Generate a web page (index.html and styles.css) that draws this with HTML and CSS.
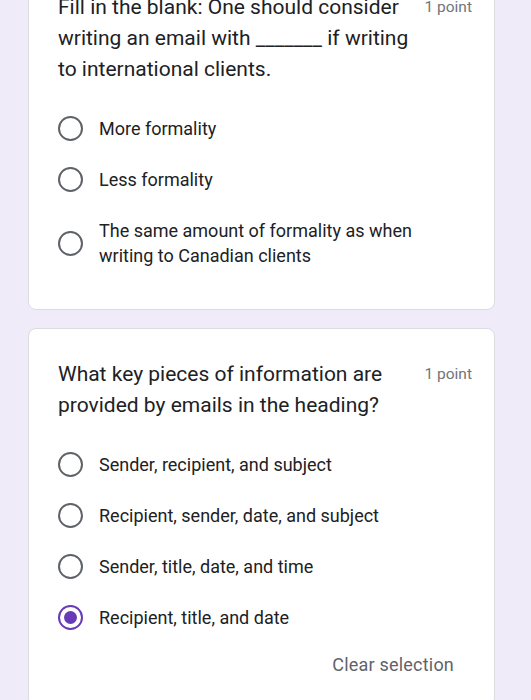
FILE: index.html
```html
<!DOCTYPE html>
<html lang="en">
<head>
    <meta charset="UTF-8">
    <meta name="viewport" content="width=device-width, initial-scale=1.0">
    <title>Quiz</title>
    <link rel="stylesheet" href="styles.css">
</head>
<body>
    <div class="form">

        <!-- Question 1 -->
        <div class="card first">
            <div class="question">
                <div class="title">Fill in the blank: One should consider writing an email with _______ if writing to international clients.</div>
                <div class="points">1 point</div>
            </div>
            <div class="options">
                <label class="option"><span class="radio"></span><span class="text">More formality</span></label>
                <label class="option"><span class="radio"></span><span class="text">Less formality</span></label>
                <label class="option"><span class="radio"></span><span class="text">The same amount of formality as when writing to Canadian clients</span></label>
            </div>
        </div>

        <!-- Question 2 -->
        <div class="card">
            <div class="question">
                <div class="title">What key pieces of information are provided by emails in the heading?</div>
                <div class="points">1 point</div>
            </div>
            <div class="options">
                <label class="option"><span class="radio"></span><span class="text">Sender, recipient, and subject</span></label>
                <label class="option"><span class="radio"></span><span class="text">Recipient, sender, date, and subject</span></label>
                <label class="option"><span class="radio"></span><span class="text">Sender, title, date, and time</span></label>
                <label class="option"><span class="radio checked"></span><span class="text">Recipient, title, and date</span></label>
            </div>
            <div class="clear-row">
                <span class="clear">Clear selection</span>
            </div>
        </div>

    </div>
</body>
</html>
```

FILE: styles.css
```css
body {
    margin: 0;
    background-color: #f0ebf8;
    font-family: Roboto, "Liberation Sans", Arial, sans-serif;
    color: #202124;
}
.form {
    display: flex;
    flex-direction: column;
    gap: 18px;
    padding: 0 36px 0 28px;
}
.card {
    background-color: #fff;
    border: 1px solid #dadce0;
    border-radius: 8px;
    padding: 30px 22px 28px 29px;
}
.card.first {
    margin-top: -39px;
}
.question {
    display: flex;
    align-items: flex-start;
}
.title {
    flex: 1;
    font-size: 21px;
    line-height: 31px;
}
.points {
    padding-left: 12px;
    font-size: 15.5px;
    line-height: 31px;
    color: #70757a;
}
.options {
    margin-top: 18px;
    display: flex;
    flex-direction: column;
}
.option {
    display: flex;
    align-items: center;
    padding: 13px 0;
    cursor: pointer;
}
.radio {
    flex: none;
    width: 21px;
    height: 21px;
    border: 2px solid #5f6368;
    border-radius: 50%;
    margin-right: 16px;
    display: flex;
    align-items: center;
    justify-content: center;
}
.radio.checked {
    border-color: #673ab7;
}
.radio.checked::after {
    content: "";
    width: 13px;
    height: 13px;
    border-radius: 50%;
    background-color: #673ab7;
}
.text {
    max-width: 340px;
    font-size: 18px;
    line-height: 25px;
}
.clear-row {
    display: flex;
    justify-content: flex-end;
    margin-top: 10px;
    padding-right: 18px;
}
.clear {
    font-size: 18px;
    line-height: 24px;
    color: #5f6368;
    letter-spacing: 0.2px;
}
```
